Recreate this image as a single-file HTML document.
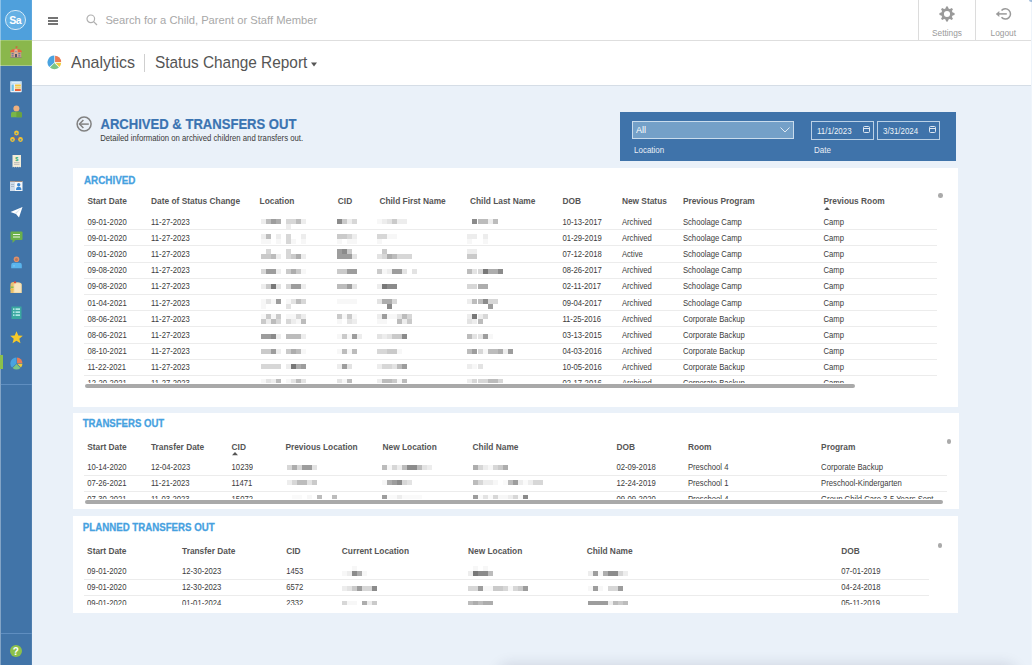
<!DOCTYPE html><html><head><meta charset="utf-8"><style>
*{margin:0;padding:0;box-sizing:border-box}
html,body{width:1032px;height:665px;overflow:hidden;background:#eaf1f9;font-family:"Liberation Sans",sans-serif}
body{position:relative}
.a{position:absolute}
.t{position:absolute;white-space:nowrap;line-height:1}
.h{font-weight:bold;color:#585858}
.b{color:#555}
</style></head><body>
<div class="a" style="left:0px;top:0px;width:32px;height:665px;background:#4174a8;"></div>
<div class="a" style="left:0px;top:0px;width:32px;height:40px;background:#4fa0dc;"></div>
<div class="a" style="left:0px;top:40px;width:32px;height:1px;background:#9cc66e;"></div>
<div class="a" style="left:0px;top:41px;width:32px;height:24px;background:#8ab74c;"></div>
<div class="a" style="left:0px;top:65px;width:32px;height:1px;background:#a8c98a;"></div>
<div class="a" style="left:0px;top:0px;width:1px;height:665px;background:rgba(255,255,255,0.35);"></div>
<div class="a" style="left:31px;top:0px;width:1px;height:665px;background:rgba(255,255,255,0.08);"></div>
<div class="a" style="left:1px;top:384px;width:31px;height:1px;background:#5f8ec0;"></div>
<div class="a" style="left:1px;top:633px;width:31px;height:1px;background:#5f8ec0;"></div>
<div class="a" style="left:0px;top:355px;width:3px;height:14px;background:#8cc04b;"></div>
<div class="a" style="left:5px;top:9.5px;width:20.6px;height:20.6px;border-radius:50%;border:1px solid #d6eaf8;background:#64b0e4"></div>
<div class="t" style="left:9.20px;top:14.91px;font-size:10.5px;color:#fff;font-weight:bold;letter-spacing:-0.5px">Sa</div>
<svg class="a" style="left:10px;top:46px" width="12" height="12" viewBox="0 0 12 12">
<rect x="5.8" y="0.3" width="0.5" height="3" fill="#c44"/>
<polygon points="6.2,0.3 8.3,0.9 6.2,1.7" fill="#e8503a"/>
<polygon points="0.2,5 2.5,3.2 9.5,3.2 11.8,5 11.8,6.3 0.2,6.3" fill="#ea6440"/>
<polygon points="4,4 6,2.4 8,4" fill="#e8a080"/>
<rect x="0.8" y="6.3" width="10.4" height="5" fill="#d4a08a"/>
<rect x="4.3" y="4" width="3.4" height="7.3" fill="#dcae96"/>
<rect x="1.6" y="7" width="2" height="1.3" fill="#6a78a0"/><rect x="8.4" y="7" width="2" height="1.3" fill="#6a78a0"/>
<rect x="1.6" y="9.2" width="2" height="1.3" fill="#6a78a0"/><rect x="8.4" y="9.2" width="2" height="1.3" fill="#6a78a0"/>
<rect x="5.1" y="8" width="1.8" height="3.3" fill="#4a5060"/>
<circle cx="6" cy="5.6" r="0.7" fill="#6a88b8"/>
<rect x="0.2" y="11.1" width="11.6" height="0.7" fill="#8a7a80"/>
</svg>
<svg class="a" style="left:10px;top:80px" width="13" height="13" viewBox="0 0 13 13"><rect x="0.3" y="1.3" width="11.4" height="11" rx="0.8" fill="#eef0f2"/><rect x="0.3" y="1.3" width="11.4" height="2.2" fill="#a8d0f0"/><rect x="1.5" y="2" width="9" height="0.8" fill="#e8f4fc"/>
<rect x="1.5" y="4.5" width="2.3" height="6.5" fill="#6cc0e8"/><rect x="5" y="4.5" width="5.8" height="2" fill="#f2c640"/><rect x="5" y="7.3" width="5.8" height="1.2" fill="#f2c640"/><rect x="5" y="9" width="5.8" height="2" fill="#e8643e"/></svg>
<svg class="a" style="left:10px;top:105px" width="13" height="13" viewBox="0 0 13 13"><circle cx="6.4" cy="3.4" r="3" fill="#eeb07e"/><path d="M1 12.3 V8.6 Q1 6.7 3 6.7 H9.8 Q11.8 6.7 11.8 8.6 V12.3 Z" fill="#7ab648"/><path d="M6.4 6.7 H9.8 Q11.8 6.7 11.8 8.6 V12.3 H6.4Z" fill="#6aa23e"/></svg>
<svg class="a" style="left:10px;top:130px" width="13" height="13" viewBox="0 0 13 13"><line x1="6.5" y1="3" x2="2.5" y2="9" stroke="#c0504a" stroke-width="0.8"/><line x1="6.5" y1="3" x2="10.5" y2="9" stroke="#c0504a" stroke-width="0.8"/><line x1="2.5" y1="9" x2="10.5" y2="9" stroke="#c0504a" stroke-width="0.8"/>
<circle cx="6.5" cy="3" r="2.4" fill="#f3c230"/><circle cx="6.5" cy="3.3" r="0.9" fill="#3d8fd0"/>
<circle cx="2.5" cy="9.5" r="2.4" fill="#f3c230"/><circle cx="2.5" cy="9.8" r="0.9" fill="#3d8fd0"/>
<circle cx="10.5" cy="9.5" r="2.4" fill="#f3c230"/><circle cx="10.5" cy="9.8" r="0.9" fill="#3d8fd0"/></svg>
<svg class="a" style="left:10px;top:155px" width="13" height="13" viewBox="0 0 13 13"><path d="M2.5 0 H11 V12.5 L9.9 11.8 L8.8 12.5 L7.7 11.8 L6.6 12.5 L5.5 11.8 L4.4 12.5 L3.4 11.8 L2.5 12.5 Z" fill="#f2ecd8"/><text x="6.7" y="5.6" font-size="5.5" fill="#2aa870" text-anchor="middle" font-family="Liberation Sans" font-weight="bold">$</text><rect x="4" y="7.3" width="5.5" height="0.9" fill="#b0b0b0"/><rect x="4" y="9" width="5.5" height="0.9" fill="#c0c0c0"/></svg>
<svg class="a" style="left:10px;top:180px" width="13" height="13" viewBox="0 0 13 13"><rect x="0" y="1" width="12.5" height="10" fill="#f4f6f8"/><rect x="0" y="1" width="12.5" height="0.8" fill="#8a7060"/><rect x="0" y="1.8" width="5" height="9.2" fill="#cfdceb"/><rect x="1" y="4" width="3" height="0.7" fill="#9ab"/><rect x="1" y="6" width="3" height="0.7" fill="#9ab"/><circle cx="8.7" cy="4.8" r="1.7" fill="#3a86d0"/><path d="M6 10 Q6 6.8 8.7 6.8 Q11.4 6.8 11.4 10Z" fill="#3a86d0"/></svg>
<svg class="a" style="left:10px;top:206px" width="13" height="13" viewBox="0 0 13 13"><path d="M0.5 6 L12.5 1 L9 11.5 L6 8 Z" fill="#fff"/><path d="M6 8 L12.5 1 L5 7Z" fill="#d8e4ee"/></svg>
<svg class="a" style="left:10px;top:231px" width="13" height="13" viewBox="0 0 13 13"><rect x="0.5" y="0.5" width="12" height="8.5" rx="1" fill="#6ab04a"/><path d="M2.5 9 L2.5 12 L5.5 9Z" fill="#6ab04a"/><rect x="3" y="3" width="7" height="1" fill="#e8f4e0"/><rect x="3" y="5.5" width="7" height="1" fill="#e8f4e0"/></svg>
<svg class="a" style="left:10px;top:256px" width="13" height="13" viewBox="0 0 13 13"><circle cx="6.5" cy="3.3" r="2.8" fill="#e0906a"/><circle cx="6.5" cy="3.5" r="1.5" fill="#b8785a"/><path d="M1.2 12.3 V9 Q1.2 6.8 3.4 6.8 H9.6 Q11.8 6.8 11.8 9 V12.3 Z" fill="#5ab4ec"/><rect x="3" y="9.5" width="2" height="0.8" fill="#8ccaf4"/></svg>
<svg class="a" style="left:10px;top:281px" width="13" height="13" viewBox="0 0 13 13"><path d="M0.5 3.5 Q0.5 1 3.5 1 Q6.5 1 6.5 3.5 V12 H0.5Z" fill="#e8c070"/><path d="M3.5 3.8 Q3.5 1.2 7.5 1.2 Q11.8 1.2 11.8 3.8 V12 H3.5Z" fill="#f4d8a0"/><path d="M4.5 4.2 Q4.5 2.2 7.6 2.2 Q10.8 2.2 10.8 4.2 V11.2 H4.5Z" fill="#f8e6c0"/><circle cx="5" cy="1.3" r="1.1" fill="#e04a3a"/><rect x="0.5" y="5.5" width="3" height="1.5" fill="#8cc04b"/><rect x="0.5" y="8" width="3" height="1.2" fill="#f2c640"/></svg>
<svg class="a" style="left:10px;top:306px" width="13" height="13" viewBox="0 0 13 13"><rect x="1.5" y="0.5" width="10" height="12.5" fill="#3aa8a0"/><rect x="3" y="2.5" width="1.5" height="1.2" fill="#dff"/><rect x="5.5" y="2.5" width="4.5" height="1.2" fill="#dff"/><rect x="3" y="5.5" width="1.5" height="1.2" fill="#dff"/><rect x="5.5" y="5.5" width="4.5" height="1.2" fill="#dff"/><rect x="3" y="8.5" width="1.5" height="1.2" fill="#dff"/><rect x="5.5" y="8.5" width="4.5" height="1.2" fill="#dff"/></svg>
<svg class="a" style="left:10px;top:331px" width="13" height="13" viewBox="0 0 13 13"><polygon points="6.5,0.3 8.3,4.5 12.8,4.8 9.3,7.8 10.5,12.3 6.5,9.8 2.5,12.3 3.7,7.8 0.2,4.8 4.7,4.5" fill="#f6c928"/></svg>
<svg class="a" style="left:10px;top:357px" width="13" height="13" viewBox="0 0 14 14">
<path d="M7 7 L7 0.5 A6.5 6.5 0 0 0 2.2 11.4 Z" fill="#4aa3e0"/>
<path d="M7.6 6.6 L7.6 0.6 A6.2 6.2 0 0 1 13.4 6.6 Z" fill="#e97c55"/>
<path d="M7.8 7.4 L13.4 7.4 A6.2 6.2 0 0 1 11.8 11.3 Z" fill="#f0cc3a"/>
<path d="M7 7.6 L11.3 11.8 A6.2 6.2 0 0 1 2.8 11.8 Z" fill="#7cc484"/>
</svg>
<div class="a" style="left:10px;top:645px;width:12px;height:12px;border-radius:50%;background:#8cc04b"></div>
<div class="t" style="left:12.80px;top:646.53px;font-size:10px;color:#fff;font-weight:bold;">?</div>
<div class="a" style="left:32px;top:0px;width:1000px;height:40px;background:#fff;"></div>
<div class="a" style="left:32px;top:40px;width:1000px;height:1px;background:#dedede;"></div>
<div class="a" style="left:48px;top:17.3px;width:10px;height:1.5px;background:#747474;"></div>
<div class="a" style="left:48px;top:20.3px;width:10px;height:1.5px;background:#747474;"></div>
<div class="a" style="left:48px;top:23.3px;width:10px;height:1.5px;background:#747474;"></div>
<svg class="a" style="left:86px;top:14px" width="12" height="12" viewBox="0 0 12 12"><circle cx="4.8" cy="4.8" r="3.8" fill="none" stroke="#b0b0b0" stroke-width="1.2"/><line x1="7.6" y1="7.6" x2="11" y2="11" stroke="#b0b0b0" stroke-width="1.3"/></svg>
<div class="t" style="left:105.40px;top:14.92px;font-size:11.2px;color:#a8a8a8;">Search for a Child, Parent or Staff Member</div>
<div class="a" style="left:918px;top:0px;width:1px;height:40px;background:#dcdcdc;"></div>
<div class="a" style="left:975px;top:0px;width:1px;height:40px;background:#dcdcdc;"></div>
<svg class="a" style="left:936.8px;top:4.3px" width="20" height="20" viewBox="0 0 20 20"><path d="M8.33 5.29 L9.10 2.45 L10.90 2.45 L11.67 5.29Z M12.15 5.49 L14.70 4.03 L15.97 5.30 L14.51 7.85Z M14.71 8.33 L17.55 9.10 L17.55 10.90 L14.71 11.67Z M14.51 12.15 L15.97 14.70 L14.70 15.97 L12.15 14.51Z M11.67 14.71 L10.90 17.55 L9.10 17.55 L8.33 14.71Z M7.85 14.51 L5.30 15.97 L4.03 14.70 L5.49 12.15Z M5.29 11.67 L2.45 10.90 L2.45 9.10 L5.29 8.33Z M5.49 7.85 L4.03 5.30 L5.30 4.03 L7.85 5.49Z" fill="#9a9a9a"/><circle cx="10" cy="10" r="4.4" fill="none" stroke="#9a9a9a" stroke-width="2.7"/></svg>
<div class="t" style="left:932.00px;top:28.97px;font-size:8.3px;color:#9a9a9a;transform:scaleY(1.05);transform-origin:0 7.03px;">Settings</div>
<svg class="a" style="left:994px;top:6px" width="20" height="17" viewBox="0 0 20 17"><path d="M7.5 4.6 A5.1 5.1 0 1 1 7.5 11.2" fill="none" stroke="#9a9a9a" stroke-width="1.5"/><line x1="4.5" y1="7.9" x2="12.8" y2="7.9" stroke="#9a9a9a" stroke-width="1.5"/><polygon points="1.8,7.9 5.3,4.9 5.3,10.9" fill="#9a9a9a"/></svg>
<div class="t" style="left:990.50px;top:28.93px;font-size:8.35px;color:#9a9a9a;transform:scaleY(1.05);transform-origin:0 7.07px;">Logout</div>
<div class="a" style="left:32px;top:41px;width:1000px;height:44px;background:#fff;"></div>
<div class="a" style="left:32px;top:85px;width:1000px;height:1px;background:#d5dde6;"></div>
<svg class="a" style="left:47.3px;top:55.2px" width="14.8" height="14.8" viewBox="0 0 14 14">
<path d="M7 7 L7 0.5 A6.5 6.5 0 0 0 2.2 11.4 Z" fill="#4aa3e0"/>
<path d="M7.6 6.6 L7.6 0.6 A6.2 6.2 0 0 1 13.4 6.6 Z" fill="#e97c55"/>
<path d="M7.8 7.4 L13.4 7.4 A6.2 6.2 0 0 1 11.8 11.3 Z" fill="#f0cc3a"/>
<path d="M7 7.6 L11.3 11.8 A6.2 6.2 0 0 1 2.8 11.8 Z" fill="#7cc484"/>
</svg>
<div class="t" style="left:71.00px;top:54.76px;font-size:16px;color:#555;transform:scaleY(1.05);transform-origin:0 13.54px;">Analytics</div>
<div class="a" style="left:144px;top:53.5px;width:1.2px;height:18.5px;background:#cfcfcf;"></div>
<div class="t" style="left:155.00px;top:54.96px;font-size:15.4px;color:#555;transform:scaleY(1.13);transform-origin:0 13.04px;">Status Change Report</div>
<svg class="a" style="left:310.5px;top:62px" width="6" height="5"><polygon points="0,0.5 6,0.5 3,4.5" fill="#555"/></svg>
<svg class="a" style="left:76px;top:116px" width="17" height="17" viewBox="0 0 17 17"><circle cx="8.1" cy="8.1" r="7.0" fill="none" stroke="#828282" stroke-width="1.5"/><line x1="3.6" y1="8.1" x2="12.8" y2="8.1" stroke="#828282" stroke-width="1.5"/><path d="M7.4 4.1 L3.5 8.1 L7.4 12.1" fill="none" stroke="#828282" stroke-width="1.5"/></svg>
<div class="t" style="left:100.50px;top:118.14px;font-size:13.07px;color:#3b74b2;font-weight:bold;-webkit-text-stroke:0.2px #3b74b2;transform:scaleY(1.06);transform-origin:0 11.06px;">ARCHIVED &amp; TRANSFERS OUT</div>
<div class="t" style="left:100.20px;top:134.64px;font-size:7.75px;color:#3a3a3a;transform:scaleY(1.1);transform-origin:0 6.56px;">Detailed information on archived children and transfers out.</div>
<div class="a" style="left:620px;top:112px;width:335.5px;height:49px;background:#3f73aa;"></div>
<div class="a" style="left:632px;top:121px;width:162px;height:18px;background:#74a0c8;border:1px solid rgba(230,240,250,0.75)"></div>
<div class="t" style="left:636.00px;top:126.38px;font-size:9px;color:#fff;transform:scaleY(1.08);transform-origin:0 7.62px;">All</div>
<svg class="a" style="left:780px;top:127px" width="10" height="6"><path d="M0.5 0.5 L5 5 L9.5 0.5" fill="none" stroke="#e0eaf4" stroke-width="1"/></svg>
<div class="t" style="left:634.00px;top:146.63px;font-size:8px;color:#e8eef6;transform:scaleY(1.08);transform-origin:0 6.77px;">Location</div>
<div class="a" style="left:811px;top:121px;width:63px;height:18.5px;border:1px solid rgba(230,240,250,0.75)"></div>
<div class="t" style="left:817.00px;top:127.51px;font-size:7.9px;color:#eef3f8;transform:scaleY(1.15);transform-origin:0 6.69px;">11/1/2023</div>
<svg class="a" style="left:863px;top:126px" width="7" height="7"><rect x="0.5" y="0.5" width="6" height="6" rx="1" fill="none" stroke="#dfe8f2" stroke-width="1"/><rect x="0.5" y="2" width="6" height="1" fill="#dfe8f2"/></svg>
<div class="a" style="left:877px;top:121px;width:63px;height:18.5px;border:1px solid rgba(230,240,250,0.75)"></div>
<div class="t" style="left:883.00px;top:127.51px;font-size:7.9px;color:#eef3f8;transform:scaleY(1.15);transform-origin:0 6.69px;">3/31/2024</div>
<svg class="a" style="left:929px;top:126px" width="7" height="7"><rect x="0.5" y="0.5" width="6" height="6" rx="1" fill="none" stroke="#dfe8f2" stroke-width="1"/><rect x="0.5" y="2" width="6" height="1" fill="#dfe8f2"/></svg>
<div class="t" style="left:814.00px;top:146.63px;font-size:8px;color:#e8eef6;transform:scaleY(1.1);transform-origin:0 6.77px;">Date</div>
<div class="a" style="left:73px;top:168px;width:884.5px;height:239px;background:#fff;"></div>
<div class="t" style="left:83.90px;top:175.62px;font-size:9.9px;color:#46a1df;font-weight:bold;-webkit-text-stroke:0.25px #46a1df;transform:scaleY(1.06);transform-origin:0 8.38px;">ARCHIVED</div>
<div class="t" style="left:87.40px;top:197.23px;font-size:8.35px;color:#565656;font-weight:bold;">Start Date</div>
<div class="t" style="left:151.10px;top:197.23px;font-size:8.35px;color:#565656;font-weight:bold;">Date of Status Change</div>
<div class="t" style="left:259.60px;top:197.23px;font-size:8.35px;color:#565656;font-weight:bold;">Location</div>
<div class="t" style="left:337.80px;top:197.23px;font-size:8.35px;color:#565656;font-weight:bold;">CID</div>
<div class="t" style="left:379.40px;top:197.23px;font-size:8.35px;color:#565656;font-weight:bold;">Child First Name</div>
<div class="t" style="left:470.00px;top:197.23px;font-size:8.35px;color:#565656;font-weight:bold;">Child Last Name</div>
<div class="t" style="left:562.40px;top:197.23px;font-size:8.35px;color:#565656;font-weight:bold;">DOB</div>
<div class="t" style="left:621.90px;top:197.23px;font-size:8.35px;color:#565656;font-weight:bold;">New Status</div>
<div class="t" style="left:682.90px;top:197.23px;font-size:8.35px;color:#565656;font-weight:bold;">Previous Program</div>
<div class="t" style="left:823.50px;top:197.23px;font-size:8.35px;color:#565656;font-weight:bold;">Previous Room</div>
<svg class="a" style="left:823.5px;top:206.5px" width="6" height="3.5"><polygon points="0,3.2 6,3.2 3,0" fill="#555"/></svg>
<div class="a" style="left:938.1px;top:193.2px;width:4.6px;height:4.6px;border-radius:50%;background:#aaa"></div>
<div class="a" style="left:73px;top:212px;width:884px;height:171px;overflow:hidden">
<div class="a" style="left:11px;top:17.3px;width:853px;height:1px;background:#ececec;"></div>
<div class="a" style="left:11px;top:33.48px;width:853px;height:1px;background:#ececec;"></div>
<div class="a" style="left:11px;top:49.66px;width:853px;height:1px;background:#ececec;"></div>
<div class="a" style="left:11px;top:65.84px;width:853px;height:1px;background:#ececec;"></div>
<div class="a" style="left:11px;top:82.02px;width:853px;height:1px;background:#ececec;"></div>
<div class="a" style="left:11px;top:98.2px;width:853px;height:1px;background:#ececec;"></div>
<div class="a" style="left:11px;top:114.38px;width:853px;height:1px;background:#ececec;"></div>
<div class="a" style="left:11px;top:130.56px;width:853px;height:1px;background:#ececec;"></div>
<div class="a" style="left:11px;top:146.74px;width:853px;height:1px;background:#ececec;"></div>
<div class="a" style="left:11px;top:162.92px;width:853px;height:1px;background:#ececec;"></div>
<div class="t" style="left:14.40px;top:6.78px;font-size:7.7px;color:#3c3c3c;transform:scaleY(1.1);transform-origin:0 6.52px;">09-01-2020</div>
<div class="t" style="left:78.10px;top:6.78px;font-size:7.7px;color:#3c3c3c;transform:scaleY(1.1);transform-origin:0 6.52px;">11-27-2023</div>
<div class="t" style="left:489.40px;top:6.78px;font-size:7.7px;color:#3c3c3c;transform:scaleY(1.1);transform-origin:0 6.52px;">10-13-2017</div>
<div class="t" style="left:548.90px;top:6.78px;font-size:7.7px;color:#3c3c3c;transform:scaleY(1.1);transform-origin:0 6.52px;">Archived</div>
<div class="t" style="left:609.90px;top:6.78px;font-size:7.7px;color:#3c3c3c;transform:scaleY(1.1);transform-origin:0 6.52px;">Schoolage Camp</div>
<div class="t" style="left:750.50px;top:6.78px;font-size:7.7px;color:#3c3c3c;transform:scaleY(1.1);transform-origin:0 6.52px;">Camp</div>
<div class="t" style="left:14.40px;top:22.93px;font-size:7.7px;color:#3c3c3c;transform:scaleY(1.1);transform-origin:0 6.52px;">09-01-2020</div>
<div class="t" style="left:78.10px;top:22.93px;font-size:7.7px;color:#3c3c3c;transform:scaleY(1.1);transform-origin:0 6.52px;">11-27-2023</div>
<div class="t" style="left:489.40px;top:22.93px;font-size:7.7px;color:#3c3c3c;transform:scaleY(1.1);transform-origin:0 6.52px;">01-29-2019</div>
<div class="t" style="left:548.90px;top:22.93px;font-size:7.7px;color:#3c3c3c;transform:scaleY(1.1);transform-origin:0 6.52px;">Archived</div>
<div class="t" style="left:609.90px;top:22.93px;font-size:7.7px;color:#3c3c3c;transform:scaleY(1.1);transform-origin:0 6.52px;">Schoolage Camp</div>
<div class="t" style="left:750.50px;top:22.93px;font-size:7.7px;color:#3c3c3c;transform:scaleY(1.1);transform-origin:0 6.52px;">Camp</div>
<div class="t" style="left:14.40px;top:39.08px;font-size:7.7px;color:#3c3c3c;transform:scaleY(1.1);transform-origin:0 6.52px;">09-01-2020</div>
<div class="t" style="left:78.10px;top:39.08px;font-size:7.7px;color:#3c3c3c;transform:scaleY(1.1);transform-origin:0 6.52px;">11-27-2023</div>
<div class="t" style="left:489.40px;top:39.08px;font-size:7.7px;color:#3c3c3c;transform:scaleY(1.1);transform-origin:0 6.52px;">07-12-2018</div>
<div class="t" style="left:548.90px;top:39.08px;font-size:7.7px;color:#3c3c3c;transform:scaleY(1.1);transform-origin:0 6.52px;">Active</div>
<div class="t" style="left:609.90px;top:39.08px;font-size:7.7px;color:#3c3c3c;transform:scaleY(1.1);transform-origin:0 6.52px;">Schoolage Camp</div>
<div class="t" style="left:750.50px;top:39.08px;font-size:7.7px;color:#3c3c3c;transform:scaleY(1.1);transform-origin:0 6.52px;">Camp</div>
<div class="t" style="left:14.40px;top:55.23px;font-size:7.7px;color:#3c3c3c;transform:scaleY(1.1);transform-origin:0 6.52px;">09-08-2020</div>
<div class="t" style="left:78.10px;top:55.23px;font-size:7.7px;color:#3c3c3c;transform:scaleY(1.1);transform-origin:0 6.52px;">11-27-2023</div>
<div class="t" style="left:489.40px;top:55.23px;font-size:7.7px;color:#3c3c3c;transform:scaleY(1.1);transform-origin:0 6.52px;">08-26-2017</div>
<div class="t" style="left:548.90px;top:55.23px;font-size:7.7px;color:#3c3c3c;transform:scaleY(1.1);transform-origin:0 6.52px;">Archived</div>
<div class="t" style="left:609.90px;top:55.23px;font-size:7.7px;color:#3c3c3c;transform:scaleY(1.1);transform-origin:0 6.52px;">Schoolage Camp</div>
<div class="t" style="left:750.50px;top:55.23px;font-size:7.7px;color:#3c3c3c;transform:scaleY(1.1);transform-origin:0 6.52px;">Camp</div>
<div class="t" style="left:14.40px;top:71.38px;font-size:7.7px;color:#3c3c3c;transform:scaleY(1.1);transform-origin:0 6.52px;">09-08-2020</div>
<div class="t" style="left:78.10px;top:71.38px;font-size:7.7px;color:#3c3c3c;transform:scaleY(1.1);transform-origin:0 6.52px;">11-27-2023</div>
<div class="t" style="left:489.40px;top:71.38px;font-size:7.7px;color:#3c3c3c;transform:scaleY(1.1);transform-origin:0 6.52px;">02-11-2017</div>
<div class="t" style="left:548.90px;top:71.38px;font-size:7.7px;color:#3c3c3c;transform:scaleY(1.1);transform-origin:0 6.52px;">Archived</div>
<div class="t" style="left:609.90px;top:71.38px;font-size:7.7px;color:#3c3c3c;transform:scaleY(1.1);transform-origin:0 6.52px;">Schoolage Camp</div>
<div class="t" style="left:750.50px;top:71.38px;font-size:7.7px;color:#3c3c3c;transform:scaleY(1.1);transform-origin:0 6.52px;">Camp</div>
<div class="t" style="left:14.40px;top:87.53px;font-size:7.7px;color:#3c3c3c;transform:scaleY(1.1);transform-origin:0 6.52px;">01-04-2021</div>
<div class="t" style="left:78.10px;top:87.53px;font-size:7.7px;color:#3c3c3c;transform:scaleY(1.1);transform-origin:0 6.52px;">11-27-2023</div>
<div class="t" style="left:489.40px;top:87.53px;font-size:7.7px;color:#3c3c3c;transform:scaleY(1.1);transform-origin:0 6.52px;">09-04-2017</div>
<div class="t" style="left:548.90px;top:87.53px;font-size:7.7px;color:#3c3c3c;transform:scaleY(1.1);transform-origin:0 6.52px;">Archived</div>
<div class="t" style="left:609.90px;top:87.53px;font-size:7.7px;color:#3c3c3c;transform:scaleY(1.1);transform-origin:0 6.52px;">Schoolage Camp</div>
<div class="t" style="left:750.50px;top:87.53px;font-size:7.7px;color:#3c3c3c;transform:scaleY(1.1);transform-origin:0 6.52px;">Camp</div>
<div class="t" style="left:14.40px;top:103.68px;font-size:7.7px;color:#3c3c3c;transform:scaleY(1.1);transform-origin:0 6.52px;">08-06-2021</div>
<div class="t" style="left:78.10px;top:103.68px;font-size:7.7px;color:#3c3c3c;transform:scaleY(1.1);transform-origin:0 6.52px;">11-27-2023</div>
<div class="t" style="left:489.40px;top:103.68px;font-size:7.7px;color:#3c3c3c;transform:scaleY(1.1);transform-origin:0 6.52px;">11-25-2016</div>
<div class="t" style="left:548.90px;top:103.68px;font-size:7.7px;color:#3c3c3c;transform:scaleY(1.1);transform-origin:0 6.52px;">Archived</div>
<div class="t" style="left:609.90px;top:103.68px;font-size:7.7px;color:#3c3c3c;transform:scaleY(1.1);transform-origin:0 6.52px;">Corporate Backup</div>
<div class="t" style="left:750.50px;top:103.68px;font-size:7.7px;color:#3c3c3c;transform:scaleY(1.1);transform-origin:0 6.52px;">Camp</div>
<div class="t" style="left:14.40px;top:119.83px;font-size:7.7px;color:#3c3c3c;transform:scaleY(1.1);transform-origin:0 6.52px;">08-06-2021</div>
<div class="t" style="left:78.10px;top:119.83px;font-size:7.7px;color:#3c3c3c;transform:scaleY(1.1);transform-origin:0 6.52px;">11-27-2023</div>
<div class="t" style="left:489.40px;top:119.83px;font-size:7.7px;color:#3c3c3c;transform:scaleY(1.1);transform-origin:0 6.52px;">03-13-2015</div>
<div class="t" style="left:548.90px;top:119.83px;font-size:7.7px;color:#3c3c3c;transform:scaleY(1.1);transform-origin:0 6.52px;">Archived</div>
<div class="t" style="left:609.90px;top:119.83px;font-size:7.7px;color:#3c3c3c;transform:scaleY(1.1);transform-origin:0 6.52px;">Corporate Backup</div>
<div class="t" style="left:750.50px;top:119.83px;font-size:7.7px;color:#3c3c3c;transform:scaleY(1.1);transform-origin:0 6.52px;">Camp</div>
<div class="t" style="left:14.40px;top:135.98px;font-size:7.7px;color:#3c3c3c;transform:scaleY(1.1);transform-origin:0 6.52px;">08-10-2021</div>
<div class="t" style="left:78.10px;top:135.98px;font-size:7.7px;color:#3c3c3c;transform:scaleY(1.1);transform-origin:0 6.52px;">11-27-2023</div>
<div class="t" style="left:489.40px;top:135.98px;font-size:7.7px;color:#3c3c3c;transform:scaleY(1.1);transform-origin:0 6.52px;">04-03-2016</div>
<div class="t" style="left:548.90px;top:135.98px;font-size:7.7px;color:#3c3c3c;transform:scaleY(1.1);transform-origin:0 6.52px;">Archived</div>
<div class="t" style="left:609.90px;top:135.98px;font-size:7.7px;color:#3c3c3c;transform:scaleY(1.1);transform-origin:0 6.52px;">Corporate Backup</div>
<div class="t" style="left:750.50px;top:135.98px;font-size:7.7px;color:#3c3c3c;transform:scaleY(1.1);transform-origin:0 6.52px;">Camp</div>
<div class="t" style="left:14.40px;top:152.13px;font-size:7.7px;color:#3c3c3c;transform:scaleY(1.1);transform-origin:0 6.52px;">11-22-2021</div>
<div class="t" style="left:78.10px;top:152.13px;font-size:7.7px;color:#3c3c3c;transform:scaleY(1.1);transform-origin:0 6.52px;">11-27-2023</div>
<div class="t" style="left:489.40px;top:152.13px;font-size:7.7px;color:#3c3c3c;transform:scaleY(1.1);transform-origin:0 6.52px;">10-05-2016</div>
<div class="t" style="left:548.90px;top:152.13px;font-size:7.7px;color:#3c3c3c;transform:scaleY(1.1);transform-origin:0 6.52px;">Archived</div>
<div class="t" style="left:609.90px;top:152.13px;font-size:7.7px;color:#3c3c3c;transform:scaleY(1.1);transform-origin:0 6.52px;">Corporate Backup</div>
<div class="t" style="left:750.50px;top:152.13px;font-size:7.7px;color:#3c3c3c;transform:scaleY(1.1);transform-origin:0 6.52px;">Camp</div>
<div class="t" style="left:14.40px;top:168.28px;font-size:7.7px;color:#3c3c3c;transform:scaleY(1.1);transform-origin:0 6.52px;">12-20-2021</div>
<div class="t" style="left:78.10px;top:168.28px;font-size:7.7px;color:#3c3c3c;transform:scaleY(1.1);transform-origin:0 6.52px;">11-27-2023</div>
<div class="t" style="left:489.40px;top:168.28px;font-size:7.7px;color:#3c3c3c;transform:scaleY(1.1);transform-origin:0 6.52px;">02-17-2016</div>
<div class="t" style="left:548.90px;top:168.28px;font-size:7.7px;color:#3c3c3c;transform:scaleY(1.1);transform-origin:0 6.52px;">Archived</div>
<div class="t" style="left:609.90px;top:168.28px;font-size:7.7px;color:#3c3c3c;transform:scaleY(1.1);transform-origin:0 6.52px;">Corporate Backup</div>
<div class="t" style="left:750.50px;top:168.28px;font-size:7.7px;color:#3c3c3c;transform:scaleY(1.1);transform-origin:0 6.52px;">Camp</div>
<div class="a" style="left:188.00px;top:6.60px;width:5px;height:5px;background:rgb(237,237,237)"></div>
<div class="a" style="left:193.04px;top:6.60px;width:5px;height:5px;background:rgb(188,188,188)"></div>
<div class="a" style="left:198.07px;top:6.60px;width:5px;height:5px;background:rgb(157,157,157)"></div>
<div class="a" style="left:203.11px;top:6.60px;width:5px;height:5px;background:rgb(173,173,173)"></div>
<div class="a" style="left:213.18px;top:6.60px;width:5px;height:5px;background:rgb(215,215,215)"></div>
<div class="a" style="left:218.21px;top:6.60px;width:5px;height:5px;background:rgb(215,215,215)"></div>
<div class="a" style="left:223.25px;top:6.60px;width:5px;height:5px;background:rgb(188,188,188)"></div>
<div class="a" style="left:228.28px;top:6.60px;width:5px;height:5px;background:rgb(237,237,237)"></div>
<div class="a" style="left:263.52px;top:6.60px;width:5px;height:5px;background:rgb(139,139,139)"></div>
<div class="a" style="left:268.56px;top:6.60px;width:5px;height:5px;background:rgb(202,202,202)"></div>
<div class="a" style="left:273.60px;top:6.60px;width:5px;height:5px;background:rgb(237,237,237)"></div>
<div class="a" style="left:278.63px;top:6.60px;width:5px;height:5px;background:rgb(215,215,215)"></div>
<div class="a" style="left:303.81px;top:6.60px;width:5px;height:5px;background:rgb(247,247,247)"></div>
<div class="a" style="left:308.84px;top:6.60px;width:5px;height:5px;background:rgb(237,237,237)"></div>
<div class="a" style="left:313.88px;top:6.60px;width:5px;height:5px;background:rgb(227,227,227)"></div>
<div class="a" style="left:318.91px;top:6.60px;width:5px;height:5px;background:rgb(202,202,202)"></div>
<div class="a" style="left:323.94px;top:6.60px;width:5px;height:5px;background:rgb(237,237,237)"></div>
<div class="a" style="left:328.98px;top:6.60px;width:5px;height:5px;background:rgb(237,237,237)"></div>
<div class="a" style="left:399.47px;top:6.60px;width:5px;height:5px;background:rgb(139,139,139)"></div>
<div class="a" style="left:404.50px;top:6.60px;width:5px;height:5px;background:rgb(188,188,188)"></div>
<div class="a" style="left:409.54px;top:6.60px;width:5px;height:5px;background:rgb(188,188,188)"></div>
<div class="a" style="left:414.58px;top:6.60px;width:5px;height:5px;background:rgb(237,237,237)"></div>
<div class="a" style="left:419.61px;top:6.60px;width:5px;height:5px;background:rgb(188,188,188)"></div>
<div class="a" style="left:213.18px;top:11.60px;width:5px;height:5px;background:rgb(237,237,237)"></div>
<div class="a" style="left:188.00px;top:21.60px;width:5px;height:5px;background:rgb(237,237,237)"></div>
<div class="a" style="left:193.04px;top:21.60px;width:5px;height:5px;background:rgb(188,188,188)"></div>
<div class="a" style="left:203.11px;top:21.60px;width:5px;height:5px;background:rgb(237,237,237)"></div>
<div class="a" style="left:213.18px;top:21.60px;width:5px;height:5px;background:rgb(215,215,215)"></div>
<div class="a" style="left:228.28px;top:21.60px;width:5px;height:5px;background:rgb(237,237,237)"></div>
<div class="a" style="left:263.52px;top:21.60px;width:5px;height:5px;background:rgb(202,202,202)"></div>
<div class="a" style="left:268.56px;top:21.60px;width:5px;height:5px;background:rgb(202,202,202)"></div>
<div class="a" style="left:273.60px;top:21.60px;width:5px;height:5px;background:rgb(215,215,215)"></div>
<div class="a" style="left:278.63px;top:21.60px;width:5px;height:5px;background:rgb(237,237,237)"></div>
<div class="a" style="left:303.81px;top:21.60px;width:5px;height:5px;background:rgb(215,215,215)"></div>
<div class="a" style="left:308.84px;top:21.60px;width:5px;height:5px;background:rgb(215,215,215)"></div>
<div class="a" style="left:313.88px;top:21.60px;width:5px;height:5px;background:rgb(247,247,247)"></div>
<div class="a" style="left:318.91px;top:21.60px;width:5px;height:5px;background:rgb(247,247,247)"></div>
<div class="a" style="left:394.44px;top:21.60px;width:5px;height:5px;background:rgb(237,237,237)"></div>
<div class="a" style="left:399.47px;top:21.60px;width:5px;height:5px;background:rgb(237,237,237)"></div>
<div class="a" style="left:409.54px;top:21.60px;width:5px;height:5px;background:rgb(237,237,237)"></div>
<div class="a" style="left:188.00px;top:26.60px;width:5px;height:5px;background:rgb(247,247,247)"></div>
<div class="a" style="left:193.04px;top:26.60px;width:5px;height:5px;background:rgb(247,247,247)"></div>
<div class="a" style="left:203.11px;top:26.60px;width:5px;height:5px;background:rgb(247,247,247)"></div>
<div class="a" style="left:213.18px;top:26.60px;width:5px;height:5px;background:rgb(215,215,215)"></div>
<div class="a" style="left:218.21px;top:26.60px;width:5px;height:5px;background:rgb(247,247,247)"></div>
<div class="a" style="left:228.28px;top:26.60px;width:5px;height:5px;background:rgb(247,247,247)"></div>
<div class="a" style="left:263.52px;top:26.60px;width:5px;height:5px;background:rgb(247,247,247)"></div>
<div class="a" style="left:273.60px;top:26.60px;width:5px;height:5px;background:rgb(247,247,247)"></div>
<div class="a" style="left:278.63px;top:26.60px;width:5px;height:5px;background:rgb(247,247,247)"></div>
<div class="a" style="left:303.81px;top:26.60px;width:5px;height:5px;background:rgb(247,247,247)"></div>
<div class="a" style="left:394.44px;top:26.60px;width:5px;height:5px;background:rgb(247,247,247)"></div>
<div class="a" style="left:409.54px;top:26.60px;width:5px;height:5px;background:rgb(247,247,247)"></div>
<div class="a" style="left:193.04px;top:36.60px;width:5px;height:5px;background:rgb(215,215,215)"></div>
<div class="a" style="left:213.18px;top:36.60px;width:5px;height:5px;background:rgb(215,215,215)"></div>
<div class="a" style="left:263.52px;top:36.60px;width:5px;height:5px;background:rgb(157,157,157)"></div>
<div class="a" style="left:268.56px;top:36.60px;width:5px;height:5px;background:rgb(139,139,139)"></div>
<div class="a" style="left:273.60px;top:36.60px;width:5px;height:5px;background:rgb(202,202,202)"></div>
<div class="a" style="left:308.84px;top:36.60px;width:5px;height:5px;background:rgb(202,202,202)"></div>
<div class="a" style="left:394.44px;top:36.60px;width:5px;height:5px;background:rgb(237,237,237)"></div>
<div class="a" style="left:399.47px;top:36.60px;width:5px;height:5px;background:rgb(237,237,237)"></div>
<div class="a" style="left:188.00px;top:41.60px;width:5px;height:5px;background:rgb(202,202,202)"></div>
<div class="a" style="left:193.04px;top:41.60px;width:5px;height:5px;background:rgb(202,202,202)"></div>
<div class="a" style="left:198.07px;top:41.60px;width:5px;height:5px;background:rgb(188,188,188)"></div>
<div class="a" style="left:203.11px;top:41.60px;width:5px;height:5px;background:rgb(237,237,237)"></div>
<div class="a" style="left:213.18px;top:41.60px;width:5px;height:5px;background:rgb(215,215,215)"></div>
<div class="a" style="left:218.21px;top:41.60px;width:5px;height:5px;background:rgb(202,202,202)"></div>
<div class="a" style="left:223.25px;top:41.60px;width:5px;height:5px;background:rgb(173,173,173)"></div>
<div class="a" style="left:228.28px;top:41.60px;width:5px;height:5px;background:rgb(237,237,237)"></div>
<div class="a" style="left:263.52px;top:41.60px;width:5px;height:5px;background:rgb(157,157,157)"></div>
<div class="a" style="left:268.56px;top:41.60px;width:5px;height:5px;background:rgb(157,157,157)"></div>
<div class="a" style="left:273.60px;top:41.60px;width:5px;height:5px;background:rgb(157,157,157)"></div>
<div class="a" style="left:278.63px;top:41.60px;width:5px;height:5px;background:rgb(227,227,227)"></div>
<div class="a" style="left:303.81px;top:41.60px;width:5px;height:5px;background:rgb(227,227,227)"></div>
<div class="a" style="left:308.84px;top:41.60px;width:5px;height:5px;background:rgb(215,215,215)"></div>
<div class="a" style="left:313.88px;top:41.60px;width:5px;height:5px;background:rgb(173,173,173)"></div>
<div class="a" style="left:318.91px;top:41.60px;width:5px;height:5px;background:rgb(188,188,188)"></div>
<div class="a" style="left:323.94px;top:41.60px;width:5px;height:5px;background:rgb(215,215,215)"></div>
<div class="a" style="left:328.98px;top:41.60px;width:5px;height:5px;background:rgb(215,215,215)"></div>
<div class="a" style="left:334.01px;top:41.60px;width:5px;height:5px;background:rgb(215,215,215)"></div>
<div class="a" style="left:394.44px;top:41.60px;width:5px;height:5px;background:rgb(202,202,202)"></div>
<div class="a" style="left:399.47px;top:41.60px;width:5px;height:5px;background:rgb(202,202,202)"></div>
<div class="a" style="left:188.00px;top:56.60px;width:5px;height:5px;background:rgb(215,215,215)"></div>
<div class="a" style="left:193.04px;top:56.60px;width:5px;height:5px;background:rgb(157,157,157)"></div>
<div class="a" style="left:198.07px;top:56.60px;width:5px;height:5px;background:rgb(157,157,157)"></div>
<div class="a" style="left:203.11px;top:56.60px;width:5px;height:5px;background:rgb(237,237,237)"></div>
<div class="a" style="left:213.18px;top:56.60px;width:5px;height:5px;background:rgb(202,202,202)"></div>
<div class="a" style="left:218.21px;top:56.60px;width:5px;height:5px;background:rgb(173,173,173)"></div>
<div class="a" style="left:223.25px;top:56.60px;width:5px;height:5px;background:rgb(202,202,202)"></div>
<div class="a" style="left:228.28px;top:56.60px;width:5px;height:5px;background:rgb(247,247,247)"></div>
<div class="a" style="left:263.52px;top:56.60px;width:5px;height:5px;background:rgb(202,202,202)"></div>
<div class="a" style="left:268.56px;top:56.60px;width:5px;height:5px;background:rgb(202,202,202)"></div>
<div class="a" style="left:273.60px;top:56.60px;width:5px;height:5px;background:rgb(157,157,157)"></div>
<div class="a" style="left:278.63px;top:56.60px;width:5px;height:5px;background:rgb(157,157,157)"></div>
<div class="a" style="left:303.81px;top:56.60px;width:5px;height:5px;background:rgb(202,202,202)"></div>
<div class="a" style="left:308.84px;top:56.60px;width:5px;height:5px;background:rgb(247,247,247)"></div>
<div class="a" style="left:313.88px;top:56.60px;width:5px;height:5px;background:rgb(237,237,237)"></div>
<div class="a" style="left:318.91px;top:56.60px;width:5px;height:5px;background:rgb(157,157,157)"></div>
<div class="a" style="left:323.94px;top:56.60px;width:5px;height:5px;background:rgb(157,157,157)"></div>
<div class="a" style="left:328.98px;top:56.60px;width:5px;height:5px;background:rgb(227,227,227)"></div>
<div class="a" style="left:339.05px;top:56.60px;width:5px;height:5px;background:rgb(227,227,227)"></div>
<div class="a" style="left:394.44px;top:56.60px;width:5px;height:5px;background:rgb(188,188,188)"></div>
<div class="a" style="left:399.47px;top:56.60px;width:5px;height:5px;background:rgb(227,227,227)"></div>
<div class="a" style="left:404.50px;top:56.60px;width:5px;height:5px;background:rgb(215,215,215)"></div>
<div class="a" style="left:409.54px;top:56.60px;width:5px;height:5px;background:rgb(120,120,120)"></div>
<div class="a" style="left:414.58px;top:56.60px;width:5px;height:5px;background:rgb(173,173,173)"></div>
<div class="a" style="left:419.61px;top:56.60px;width:5px;height:5px;background:rgb(173,173,173)"></div>
<div class="a" style="left:424.64px;top:56.60px;width:5px;height:5px;background:rgb(139,139,139)"></div>
<div class="a" style="left:188.00px;top:71.60px;width:5px;height:5px;background:rgb(237,237,237)"></div>
<div class="a" style="left:193.04px;top:71.60px;width:5px;height:5px;background:rgb(202,202,202)"></div>
<div class="a" style="left:198.07px;top:71.60px;width:5px;height:5px;background:rgb(120,120,120)"></div>
<div class="a" style="left:203.11px;top:71.60px;width:5px;height:5px;background:rgb(227,227,227)"></div>
<div class="a" style="left:213.18px;top:71.60px;width:5px;height:5px;background:rgb(215,215,215)"></div>
<div class="a" style="left:218.21px;top:71.60px;width:5px;height:5px;background:rgb(157,157,157)"></div>
<div class="a" style="left:223.25px;top:71.60px;width:5px;height:5px;background:rgb(157,157,157)"></div>
<div class="a" style="left:228.28px;top:71.60px;width:5px;height:5px;background:rgb(237,237,237)"></div>
<div class="a" style="left:263.52px;top:71.60px;width:5px;height:5px;background:rgb(188,188,188)"></div>
<div class="a" style="left:268.56px;top:71.60px;width:5px;height:5px;background:rgb(188,188,188)"></div>
<div class="a" style="left:273.60px;top:71.60px;width:5px;height:5px;background:rgb(157,157,157)"></div>
<div class="a" style="left:278.63px;top:71.60px;width:5px;height:5px;background:rgb(227,227,227)"></div>
<div class="a" style="left:303.81px;top:71.60px;width:5px;height:5px;background:rgb(237,237,237)"></div>
<div class="a" style="left:308.84px;top:71.60px;width:5px;height:5px;background:rgb(120,120,120)"></div>
<div class="a" style="left:313.88px;top:71.60px;width:5px;height:5px;background:rgb(139,139,139)"></div>
<div class="a" style="left:318.91px;top:71.60px;width:5px;height:5px;background:rgb(139,139,139)"></div>
<div class="a" style="left:394.44px;top:71.60px;width:5px;height:5px;background:rgb(215,215,215)"></div>
<div class="a" style="left:399.47px;top:71.60px;width:5px;height:5px;background:rgb(215,215,215)"></div>
<div class="a" style="left:404.50px;top:71.60px;width:5px;height:5px;background:rgb(173,173,173)"></div>
<div class="a" style="left:409.54px;top:71.60px;width:5px;height:5px;background:rgb(173,173,173)"></div>
<div class="a" style="left:188.00px;top:86.60px;width:5px;height:5px;background:rgb(247,247,247)"></div>
<div class="a" style="left:193.04px;top:86.60px;width:5px;height:5px;background:rgb(227,227,227)"></div>
<div class="a" style="left:198.07px;top:86.60px;width:5px;height:5px;background:rgb(247,247,247)"></div>
<div class="a" style="left:203.11px;top:86.60px;width:5px;height:5px;background:rgb(157,157,157)"></div>
<div class="a" style="left:213.18px;top:86.60px;width:5px;height:5px;background:rgb(247,247,247)"></div>
<div class="a" style="left:218.21px;top:86.60px;width:5px;height:5px;background:rgb(227,227,227)"></div>
<div class="a" style="left:223.25px;top:86.60px;width:5px;height:5px;background:rgb(188,188,188)"></div>
<div class="a" style="left:228.28px;top:86.60px;width:5px;height:5px;background:rgb(215,215,215)"></div>
<div class="a" style="left:263.52px;top:86.60px;width:5px;height:5px;background:rgb(247,247,247)"></div>
<div class="a" style="left:268.56px;top:86.60px;width:5px;height:5px;background:rgb(247,247,247)"></div>
<div class="a" style="left:273.60px;top:86.60px;width:5px;height:5px;background:rgb(247,247,247)"></div>
<div class="a" style="left:278.63px;top:86.60px;width:5px;height:5px;background:rgb(247,247,247)"></div>
<div class="a" style="left:303.81px;top:86.60px;width:5px;height:5px;background:rgb(227,227,227)"></div>
<div class="a" style="left:308.84px;top:86.60px;width:5px;height:5px;background:rgb(173,173,173)"></div>
<div class="a" style="left:313.88px;top:86.60px;width:5px;height:5px;background:rgb(173,173,173)"></div>
<div class="a" style="left:318.91px;top:86.60px;width:5px;height:5px;background:rgb(215,215,215)"></div>
<div class="a" style="left:394.44px;top:86.60px;width:5px;height:5px;background:rgb(237,237,237)"></div>
<div class="a" style="left:399.47px;top:86.60px;width:5px;height:5px;background:rgb(188,188,188)"></div>
<div class="a" style="left:404.50px;top:86.60px;width:5px;height:5px;background:rgb(188,188,188)"></div>
<div class="a" style="left:409.54px;top:86.60px;width:5px;height:5px;background:rgb(139,139,139)"></div>
<div class="a" style="left:414.58px;top:86.60px;width:5px;height:5px;background:rgb(215,215,215)"></div>
<div class="a" style="left:419.61px;top:86.60px;width:5px;height:5px;background:rgb(215,215,215)"></div>
<div class="a" style="left:188.00px;top:91.60px;width:5px;height:5px;background:rgb(247,247,247)"></div>
<div class="a" style="left:213.18px;top:91.60px;width:5px;height:5px;background:rgb(227,227,227)"></div>
<div class="a" style="left:313.88px;top:91.60px;width:5px;height:5px;background:rgb(139,139,139)"></div>
<div class="a" style="left:414.58px;top:91.60px;width:5px;height:5px;background:rgb(157,157,157)"></div>
<div class="a" style="left:188.00px;top:101.60px;width:5px;height:5px;background:rgb(247,247,247)"></div>
<div class="a" style="left:193.04px;top:101.60px;width:5px;height:5px;background:rgb(202,202,202)"></div>
<div class="a" style="left:198.07px;top:101.60px;width:5px;height:5px;background:rgb(247,247,247)"></div>
<div class="a" style="left:203.11px;top:101.60px;width:5px;height:5px;background:rgb(202,202,202)"></div>
<div class="a" style="left:213.18px;top:101.60px;width:5px;height:5px;background:rgb(247,247,247)"></div>
<div class="a" style="left:218.21px;top:101.60px;width:5px;height:5px;background:rgb(247,247,247)"></div>
<div class="a" style="left:223.25px;top:101.60px;width:5px;height:5px;background:rgb(215,215,215)"></div>
<div class="a" style="left:228.28px;top:101.60px;width:5px;height:5px;background:rgb(237,237,237)"></div>
<div class="a" style="left:263.52px;top:101.60px;width:5px;height:5px;background:rgb(202,202,202)"></div>
<div class="a" style="left:268.56px;top:101.60px;width:5px;height:5px;background:rgb(247,247,247)"></div>
<div class="a" style="left:273.60px;top:101.60px;width:5px;height:5px;background:rgb(202,202,202)"></div>
<div class="a" style="left:278.63px;top:101.60px;width:5px;height:5px;background:rgb(247,247,247)"></div>
<div class="a" style="left:303.81px;top:101.60px;width:5px;height:5px;background:rgb(237,237,237)"></div>
<div class="a" style="left:308.84px;top:101.60px;width:5px;height:5px;background:rgb(157,157,157)"></div>
<div class="a" style="left:313.88px;top:101.60px;width:5px;height:5px;background:rgb(247,247,247)"></div>
<div class="a" style="left:318.91px;top:101.60px;width:5px;height:5px;background:rgb(247,247,247)"></div>
<div class="a" style="left:323.94px;top:101.60px;width:5px;height:5px;background:rgb(227,227,227)"></div>
<div class="a" style="left:328.98px;top:101.60px;width:5px;height:5px;background:rgb(188,188,188)"></div>
<div class="a" style="left:334.01px;top:101.60px;width:5px;height:5px;background:rgb(215,215,215)"></div>
<div class="a" style="left:394.44px;top:101.60px;width:5px;height:5px;background:rgb(237,237,237)"></div>
<div class="a" style="left:399.47px;top:101.60px;width:5px;height:5px;background:rgb(120,120,120)"></div>
<div class="a" style="left:404.50px;top:101.60px;width:5px;height:5px;background:rgb(237,237,237)"></div>
<div class="a" style="left:409.54px;top:101.60px;width:5px;height:5px;background:rgb(215,215,215)"></div>
<div class="a" style="left:188.00px;top:106.60px;width:5px;height:5px;background:rgb(202,202,202)"></div>
<div class="a" style="left:193.04px;top:106.60px;width:5px;height:5px;background:rgb(237,237,237)"></div>
<div class="a" style="left:198.07px;top:106.60px;width:5px;height:5px;background:rgb(188,188,188)"></div>
<div class="a" style="left:203.11px;top:106.60px;width:5px;height:5px;background:rgb(215,215,215)"></div>
<div class="a" style="left:213.18px;top:106.60px;width:5px;height:5px;background:rgb(215,215,215)"></div>
<div class="a" style="left:218.21px;top:106.60px;width:5px;height:5px;background:rgb(237,237,237)"></div>
<div class="a" style="left:223.25px;top:106.60px;width:5px;height:5px;background:rgb(247,247,247)"></div>
<div class="a" style="left:228.28px;top:106.60px;width:5px;height:5px;background:rgb(188,188,188)"></div>
<div class="a" style="left:263.52px;top:106.60px;width:5px;height:5px;background:rgb(247,247,247)"></div>
<div class="a" style="left:273.60px;top:106.60px;width:5px;height:5px;background:rgb(227,227,227)"></div>
<div class="a" style="left:278.63px;top:106.60px;width:5px;height:5px;background:rgb(237,237,237)"></div>
<div class="a" style="left:303.81px;top:106.60px;width:5px;height:5px;background:rgb(247,247,247)"></div>
<div class="a" style="left:308.84px;top:106.60px;width:5px;height:5px;background:rgb(247,247,247)"></div>
<div class="a" style="left:323.94px;top:106.60px;width:5px;height:5px;background:rgb(188,188,188)"></div>
<div class="a" style="left:328.98px;top:106.60px;width:5px;height:5px;background:rgb(237,237,237)"></div>
<div class="a" style="left:334.01px;top:106.60px;width:5px;height:5px;background:rgb(202,202,202)"></div>
<div class="a" style="left:394.44px;top:106.60px;width:5px;height:5px;background:rgb(227,227,227)"></div>
<div class="a" style="left:399.47px;top:106.60px;width:5px;height:5px;background:rgb(237,237,237)"></div>
<div class="a" style="left:404.50px;top:106.60px;width:5px;height:5px;background:rgb(188,188,188)"></div>
<div class="a" style="left:188.00px;top:121.60px;width:5px;height:5px;background:rgb(157,157,157)"></div>
<div class="a" style="left:193.04px;top:121.60px;width:5px;height:5px;background:rgb(157,157,157)"></div>
<div class="a" style="left:198.07px;top:121.60px;width:5px;height:5px;background:rgb(139,139,139)"></div>
<div class="a" style="left:203.11px;top:121.60px;width:5px;height:5px;background:rgb(237,237,237)"></div>
<div class="a" style="left:213.18px;top:121.60px;width:5px;height:5px;background:rgb(188,188,188)"></div>
<div class="a" style="left:218.21px;top:121.60px;width:5px;height:5px;background:rgb(188,188,188)"></div>
<div class="a" style="left:223.25px;top:121.60px;width:5px;height:5px;background:rgb(188,188,188)"></div>
<div class="a" style="left:228.28px;top:121.60px;width:5px;height:5px;background:rgb(237,237,237)"></div>
<div class="a" style="left:263.52px;top:121.60px;width:5px;height:5px;background:rgb(247,247,247)"></div>
<div class="a" style="left:268.56px;top:121.60px;width:5px;height:5px;background:rgb(202,202,202)"></div>
<div class="a" style="left:273.60px;top:121.60px;width:5px;height:5px;background:rgb(247,247,247)"></div>
<div class="a" style="left:278.63px;top:121.60px;width:5px;height:5px;background:rgb(157,157,157)"></div>
<div class="a" style="left:283.67px;top:121.60px;width:5px;height:5px;background:rgb(237,237,237)"></div>
<div class="a" style="left:303.81px;top:121.60px;width:5px;height:5px;background:rgb(227,227,227)"></div>
<div class="a" style="left:308.84px;top:121.60px;width:5px;height:5px;background:rgb(237,237,237)"></div>
<div class="a" style="left:313.88px;top:121.60px;width:5px;height:5px;background:rgb(227,227,227)"></div>
<div class="a" style="left:318.91px;top:121.60px;width:5px;height:5px;background:rgb(202,202,202)"></div>
<div class="a" style="left:323.94px;top:121.60px;width:5px;height:5px;background:rgb(202,202,202)"></div>
<div class="a" style="left:328.98px;top:121.60px;width:5px;height:5px;background:rgb(139,139,139)"></div>
<div class="a" style="left:394.44px;top:121.60px;width:5px;height:5px;background:rgb(188,188,188)"></div>
<div class="a" style="left:399.47px;top:121.60px;width:5px;height:5px;background:rgb(227,227,227)"></div>
<div class="a" style="left:404.50px;top:121.60px;width:5px;height:5px;background:rgb(227,227,227)"></div>
<div class="a" style="left:409.54px;top:121.60px;width:5px;height:5px;background:rgb(157,157,157)"></div>
<div class="a" style="left:414.58px;top:121.60px;width:5px;height:5px;background:rgb(247,247,247)"></div>
<div class="a" style="left:188.00px;top:136.60px;width:5px;height:5px;background:rgb(202,202,202)"></div>
<div class="a" style="left:193.04px;top:136.60px;width:5px;height:5px;background:rgb(202,202,202)"></div>
<div class="a" style="left:198.07px;top:136.60px;width:5px;height:5px;background:rgb(157,157,157)"></div>
<div class="a" style="left:203.11px;top:136.60px;width:5px;height:5px;background:rgb(237,237,237)"></div>
<div class="a" style="left:213.18px;top:136.60px;width:5px;height:5px;background:rgb(202,202,202)"></div>
<div class="a" style="left:218.21px;top:136.60px;width:5px;height:5px;background:rgb(173,173,173)"></div>
<div class="a" style="left:223.25px;top:136.60px;width:5px;height:5px;background:rgb(188,188,188)"></div>
<div class="a" style="left:228.28px;top:136.60px;width:5px;height:5px;background:rgb(247,247,247)"></div>
<div class="a" style="left:263.52px;top:136.60px;width:5px;height:5px;background:rgb(247,247,247)"></div>
<div class="a" style="left:268.56px;top:136.60px;width:5px;height:5px;background:rgb(188,188,188)"></div>
<div class="a" style="left:273.60px;top:136.60px;width:5px;height:5px;background:rgb(247,247,247)"></div>
<div class="a" style="left:278.63px;top:136.60px;width:5px;height:5px;background:rgb(188,188,188)"></div>
<div class="a" style="left:303.81px;top:136.60px;width:5px;height:5px;background:rgb(215,215,215)"></div>
<div class="a" style="left:308.84px;top:136.60px;width:5px;height:5px;background:rgb(215,215,215)"></div>
<div class="a" style="left:313.88px;top:136.60px;width:5px;height:5px;background:rgb(202,202,202)"></div>
<div class="a" style="left:318.91px;top:136.60px;width:5px;height:5px;background:rgb(202,202,202)"></div>
<div class="a" style="left:323.94px;top:136.60px;width:5px;height:5px;background:rgb(247,247,247)"></div>
<div class="a" style="left:394.44px;top:136.60px;width:5px;height:5px;background:rgb(188,188,188)"></div>
<div class="a" style="left:399.47px;top:136.60px;width:5px;height:5px;background:rgb(157,157,157)"></div>
<div class="a" style="left:404.50px;top:136.60px;width:5px;height:5px;background:rgb(215,215,215)"></div>
<div class="a" style="left:409.54px;top:136.60px;width:5px;height:5px;background:rgb(247,247,247)"></div>
<div class="a" style="left:414.58px;top:136.60px;width:5px;height:5px;background:rgb(188,188,188)"></div>
<div class="a" style="left:419.61px;top:136.60px;width:5px;height:5px;background:rgb(188,188,188)"></div>
<div class="a" style="left:424.64px;top:136.60px;width:5px;height:5px;background:rgb(173,173,173)"></div>
<div class="a" style="left:429.68px;top:136.60px;width:5px;height:5px;background:rgb(237,237,237)"></div>
<div class="a" style="left:434.72px;top:136.60px;width:5px;height:5px;background:rgb(157,157,157)"></div>
<div class="a" style="left:188.00px;top:151.60px;width:5px;height:5px;background:rgb(215,215,215)"></div>
<div class="a" style="left:193.04px;top:151.60px;width:5px;height:5px;background:rgb(215,215,215)"></div>
<div class="a" style="left:198.07px;top:151.60px;width:5px;height:5px;background:rgb(215,215,215)"></div>
<div class="a" style="left:203.11px;top:151.60px;width:5px;height:5px;background:rgb(215,215,215)"></div>
<div class="a" style="left:213.18px;top:151.60px;width:5px;height:5px;background:rgb(237,237,237)"></div>
<div class="a" style="left:218.21px;top:151.60px;width:5px;height:5px;background:rgb(120,120,120)"></div>
<div class="a" style="left:223.25px;top:151.60px;width:5px;height:5px;background:rgb(173,173,173)"></div>
<div class="a" style="left:228.28px;top:151.60px;width:5px;height:5px;background:rgb(157,157,157)"></div>
<div class="a" style="left:263.52px;top:151.60px;width:5px;height:5px;background:rgb(237,237,237)"></div>
<div class="a" style="left:268.56px;top:151.60px;width:5px;height:5px;background:rgb(157,157,157)"></div>
<div class="a" style="left:273.60px;top:151.60px;width:5px;height:5px;background:rgb(227,227,227)"></div>
<div class="a" style="left:303.81px;top:151.60px;width:5px;height:5px;background:rgb(237,237,237)"></div>
<div class="a" style="left:308.84px;top:151.60px;width:5px;height:5px;background:rgb(215,215,215)"></div>
<div class="a" style="left:313.88px;top:151.60px;width:5px;height:5px;background:rgb(215,215,215)"></div>
<div class="a" style="left:318.91px;top:151.60px;width:5px;height:5px;background:rgb(227,227,227)"></div>
<div class="a" style="left:323.94px;top:151.60px;width:5px;height:5px;background:rgb(188,188,188)"></div>
<div class="a" style="left:328.98px;top:151.60px;width:5px;height:5px;background:rgb(157,157,157)"></div>
<div class="a" style="left:394.44px;top:151.60px;width:5px;height:5px;background:rgb(237,237,237)"></div>
<div class="a" style="left:399.47px;top:151.60px;width:5px;height:5px;background:rgb(247,247,247)"></div>
<div class="a" style="left:404.50px;top:151.60px;width:5px;height:5px;background:rgb(227,227,227)"></div>
<div class="a" style="left:188.00px;top:166.60px;width:5px;height:5px;background:rgb(247,247,247)"></div>
<div class="a" style="left:193.04px;top:166.60px;width:5px;height:5px;background:rgb(227,227,227)"></div>
<div class="a" style="left:198.07px;top:166.60px;width:5px;height:5px;background:rgb(237,237,237)"></div>
<div class="a" style="left:203.11px;top:166.60px;width:5px;height:5px;background:rgb(188,188,188)"></div>
<div class="a" style="left:213.18px;top:166.60px;width:5px;height:5px;background:rgb(247,247,247)"></div>
<div class="a" style="left:218.21px;top:166.60px;width:5px;height:5px;background:rgb(227,227,227)"></div>
<div class="a" style="left:223.25px;top:166.60px;width:5px;height:5px;background:rgb(188,188,188)"></div>
<div class="a" style="left:228.28px;top:166.60px;width:5px;height:5px;background:rgb(227,227,227)"></div>
<div class="a" style="left:263.52px;top:166.60px;width:5px;height:5px;background:rgb(227,227,227)"></div>
<div class="a" style="left:268.56px;top:166.60px;width:5px;height:5px;background:rgb(247,247,247)"></div>
<div class="a" style="left:273.60px;top:166.60px;width:5px;height:5px;background:rgb(188,188,188)"></div>
<div class="a" style="left:303.81px;top:166.60px;width:5px;height:5px;background:rgb(237,237,237)"></div>
<div class="a" style="left:308.84px;top:166.60px;width:5px;height:5px;background:rgb(188,188,188)"></div>
<div class="a" style="left:313.88px;top:166.60px;width:5px;height:5px;background:rgb(188,188,188)"></div>
<div class="a" style="left:318.91px;top:166.60px;width:5px;height:5px;background:rgb(202,202,202)"></div>
<div class="a" style="left:323.94px;top:166.60px;width:5px;height:5px;background:rgb(247,247,247)"></div>
<div class="a" style="left:328.98px;top:166.60px;width:5px;height:5px;background:rgb(188,188,188)"></div>
<div class="a" style="left:394.44px;top:166.60px;width:5px;height:5px;background:rgb(237,237,237)"></div>
<div class="a" style="left:399.47px;top:166.60px;width:5px;height:5px;background:rgb(215,215,215)"></div>
<div class="a" style="left:404.50px;top:166.60px;width:5px;height:5px;background:rgb(215,215,215)"></div>
<div class="a" style="left:409.54px;top:166.60px;width:5px;height:5px;background:rgb(215,215,215)"></div>
<div class="a" style="left:414.58px;top:166.60px;width:5px;height:5px;background:rgb(188,188,188)"></div>
<div class="a" style="left:419.61px;top:166.60px;width:5px;height:5px;background:rgb(188,188,188)"></div>
<div class="a" style="left:424.64px;top:166.60px;width:5px;height:5px;background:rgb(215,215,215)"></div>
</div>
<div class="a" style="left:84.5px;top:383.6px;width:770px;height:4.6px;border-radius:2.3px;background:#a9a9a9"></div>
<div class="a" style="left:73px;top:412.7px;width:885.5px;height:96.5px;background:#fff;"></div>
<div class="t" style="left:82.70px;top:419.07px;font-size:9.6px;color:#46a1df;font-weight:bold;-webkit-text-stroke:0.25px #46a1df;transform:scaleY(1.06);transform-origin:0 8.13px;">TRANSFERS OUT</div>
<div class="t" style="left:87.20px;top:443.03px;font-size:8.35px;color:#565656;font-weight:bold;">Start Date</div>
<div class="t" style="left:150.90px;top:443.03px;font-size:8.35px;color:#565656;font-weight:bold;">Transfer Date</div>
<div class="t" style="left:231.60px;top:443.03px;font-size:8.35px;color:#565656;font-weight:bold;">CID</div>
<div class="t" style="left:285.40px;top:443.03px;font-size:8.35px;color:#565656;font-weight:bold;">Previous Location</div>
<div class="t" style="left:382.50px;top:443.03px;font-size:8.35px;color:#565656;font-weight:bold;">New Location</div>
<div class="t" style="left:472.60px;top:443.03px;font-size:8.35px;color:#565656;font-weight:bold;">Child Name</div>
<div class="t" style="left:616.40px;top:443.03px;font-size:8.35px;color:#565656;font-weight:bold;">DOB</div>
<div class="t" style="left:687.90px;top:443.03px;font-size:8.35px;color:#565656;font-weight:bold;">Room</div>
<div class="t" style="left:821.10px;top:443.03px;font-size:8.35px;color:#565656;font-weight:bold;">Program</div>
<svg class="a" style="left:231.6px;top:452.3px" width="6" height="3.5"><polygon points="0,3.2 6,3.2 3,0" fill="#555"/></svg>
<div class="a" style="left:946.5px;top:439.2px;width:4.6px;height:4.6px;border-radius:50%;background:#aaa"></div>
<div class="a" style="left:73px;top:458px;width:885px;height:41px;overflow:hidden">
<div class="a" style="left:11px;top:17.3px;width:863px;height:1px;background:#ececec;"></div>
<div class="a" style="left:11px;top:33.3px;width:863px;height:1px;background:#ececec;"></div>
<div class="t" style="left:14.20px;top:6.08px;font-size:7.7px;color:#3c3c3c;transform:scaleY(1.1);transform-origin:0 6.52px;">10-14-2020</div>
<div class="t" style="left:77.90px;top:6.08px;font-size:7.7px;color:#3c3c3c;transform:scaleY(1.1);transform-origin:0 6.52px;">12-04-2023</div>
<div class="t" style="left:158.60px;top:6.08px;font-size:7.7px;color:#3c3c3c;transform:scaleY(1.1);transform-origin:0 6.52px;">10239</div>
<div class="t" style="left:543.40px;top:6.08px;font-size:7.7px;color:#3c3c3c;transform:scaleY(1.1);transform-origin:0 6.52px;">02-09-2018</div>
<div class="t" style="left:614.90px;top:6.08px;font-size:7.7px;color:#3c3c3c;transform:scaleY(1.1);transform-origin:0 6.52px;">Preschool 4</div>
<div class="t" style="left:748.10px;top:6.08px;font-size:7.7px;color:#3c3c3c;transform:scaleY(1.1);transform-origin:0 6.52px;">Corporate Backup</div>
<div class="t" style="left:14.20px;top:21.98px;font-size:7.7px;color:#3c3c3c;transform:scaleY(1.1);transform-origin:0 6.52px;">07-26-2021</div>
<div class="t" style="left:77.90px;top:21.98px;font-size:7.7px;color:#3c3c3c;transform:scaleY(1.1);transform-origin:0 6.52px;">11-21-2023</div>
<div class="t" style="left:158.60px;top:21.98px;font-size:7.7px;color:#3c3c3c;transform:scaleY(1.1);transform-origin:0 6.52px;">11471</div>
<div class="t" style="left:543.40px;top:21.98px;font-size:7.7px;color:#3c3c3c;transform:scaleY(1.1);transform-origin:0 6.52px;">12-24-2019</div>
<div class="t" style="left:614.90px;top:21.98px;font-size:7.7px;color:#3c3c3c;transform:scaleY(1.1);transform-origin:0 6.52px;">Preschool 1</div>
<div class="t" style="left:748.10px;top:21.98px;font-size:7.7px;color:#3c3c3c;transform:scaleY(1.1);transform-origin:0 6.52px;">Preschool-Kindergarten</div>
<div class="t" style="left:14.20px;top:37.88px;font-size:7.7px;color:#3c3c3c;transform:scaleY(1.1);transform-origin:0 6.52px;">07-30-2021</div>
<div class="t" style="left:77.90px;top:37.88px;font-size:7.7px;color:#3c3c3c;transform:scaleY(1.1);transform-origin:0 6.52px;">11-03-2023</div>
<div class="t" style="left:158.60px;top:37.88px;font-size:7.7px;color:#3c3c3c;transform:scaleY(1.1);transform-origin:0 6.52px;">15072</div>
<div class="t" style="left:543.40px;top:37.88px;font-size:7.7px;color:#3c3c3c;transform:scaleY(1.1);transform-origin:0 6.52px;">09-09-2020</div>
<div class="t" style="left:614.90px;top:37.88px;font-size:7.7px;color:#3c3c3c;transform:scaleY(1.1);transform-origin:0 6.52px;">Preschool 4</div>
<div class="t" style="left:748.10px;top:37.88px;font-size:7.7px;color:#3c3c3c;transform:scaleY(1.1);transform-origin:0 6.52px;">Group Child Care 3-5 Years Sept</div>
<div class="a" style="left:214.00px;top:6.80px;width:5px;height:5px;background:rgb(215,215,215)"></div>
<div class="a" style="left:219.00px;top:6.80px;width:5px;height:5px;background:rgb(173,173,173)"></div>
<div class="a" style="left:224.00px;top:6.80px;width:5px;height:5px;background:rgb(215,215,215)"></div>
<div class="a" style="left:229.00px;top:6.80px;width:5px;height:5px;background:rgb(157,157,157)"></div>
<div class="a" style="left:234.00px;top:6.80px;width:5px;height:5px;background:rgb(157,157,157)"></div>
<div class="a" style="left:239.00px;top:6.80px;width:5px;height:5px;background:rgb(227,227,227)"></div>
<div class="a" style="left:214.00px;top:21.80px;width:5px;height:5px;background:rgb(237,237,237)"></div>
<div class="a" style="left:219.00px;top:21.80px;width:5px;height:5px;background:rgb(215,215,215)"></div>
<div class="a" style="left:224.00px;top:21.80px;width:5px;height:5px;background:rgb(188,188,188)"></div>
<div class="a" style="left:229.00px;top:21.80px;width:5px;height:5px;background:rgb(188,188,188)"></div>
<div class="a" style="left:234.00px;top:21.80px;width:5px;height:5px;background:rgb(227,227,227)"></div>
<div class="a" style="left:239.00px;top:21.80px;width:5px;height:5px;background:rgb(202,202,202)"></div>
<div class="a" style="left:219.00px;top:37.00px;width:5px;height:5px;background:rgb(250,250,250)"></div>
<div class="a" style="left:224.00px;top:37.00px;width:5px;height:5px;background:rgb(250,250,250)"></div>
<div class="a" style="left:234.00px;top:37.00px;width:5px;height:5px;background:rgb(247,247,247)"></div>
<div class="a" style="left:244.00px;top:37.00px;width:5px;height:5px;background:rgb(188,188,188)"></div>
<div class="a" style="left:259.00px;top:37.00px;width:5px;height:5px;background:rgb(188,188,188)"></div>
<div class="a" style="left:309.00px;top:6.80px;width:5px;height:5px;background:rgb(188,188,188)"></div>
<div class="a" style="left:314.00px;top:6.80px;width:5px;height:5px;background:rgb(247,247,247)"></div>
<div class="a" style="left:319.00px;top:6.80px;width:5px;height:5px;background:rgb(215,215,215)"></div>
<div class="a" style="left:324.00px;top:6.80px;width:5px;height:5px;background:rgb(237,237,237)"></div>
<div class="a" style="left:329.00px;top:6.80px;width:5px;height:5px;background:rgb(188,188,188)"></div>
<div class="a" style="left:334.00px;top:6.80px;width:5px;height:5px;background:rgb(139,139,139)"></div>
<div class="a" style="left:339.00px;top:6.80px;width:5px;height:5px;background:rgb(139,139,139)"></div>
<div class="a" style="left:344.00px;top:6.80px;width:5px;height:5px;background:rgb(188,188,188)"></div>
<div class="a" style="left:349.00px;top:6.80px;width:5px;height:5px;background:rgb(227,227,227)"></div>
<div class="a" style="left:354.00px;top:6.80px;width:5px;height:5px;background:rgb(237,237,237)"></div>
<div class="a" style="left:309.00px;top:21.80px;width:5px;height:5px;background:rgb(247,247,247)"></div>
<div class="a" style="left:314.00px;top:21.80px;width:5px;height:5px;background:rgb(173,173,173)"></div>
<div class="a" style="left:319.00px;top:21.80px;width:5px;height:5px;background:rgb(157,157,157)"></div>
<div class="a" style="left:324.00px;top:21.80px;width:5px;height:5px;background:rgb(139,139,139)"></div>
<div class="a" style="left:329.00px;top:21.80px;width:5px;height:5px;background:rgb(215,215,215)"></div>
<div class="a" style="left:334.00px;top:21.80px;width:5px;height:5px;background:rgb(227,227,227)"></div>
<div class="a" style="left:309.00px;top:37.00px;width:5px;height:5px;background:rgb(157,157,157)"></div>
<div class="a" style="left:314.00px;top:37.00px;width:5px;height:5px;background:rgb(250,250,250)"></div>
<div class="a" style="left:319.00px;top:37.00px;width:5px;height:5px;background:rgb(250,250,250)"></div>
<div class="a" style="left:324.00px;top:37.00px;width:5px;height:5px;background:rgb(237,237,237)"></div>
<div class="a" style="left:329.00px;top:37.00px;width:5px;height:5px;background:rgb(250,250,250)"></div>
<div class="a" style="left:334.00px;top:37.00px;width:5px;height:5px;background:rgb(250,250,250)"></div>
<div class="a" style="left:339.00px;top:37.00px;width:5px;height:5px;background:rgb(250,250,250)"></div>
<div class="a" style="left:344.00px;top:37.00px;width:5px;height:5px;background:rgb(250,250,250)"></div>
<div class="a" style="left:400.00px;top:6.80px;width:5px;height:5px;background:rgb(173,173,173)"></div>
<div class="a" style="left:405.00px;top:6.80px;width:5px;height:5px;background:rgb(215,215,215)"></div>
<div class="a" style="left:410.00px;top:6.80px;width:5px;height:5px;background:rgb(237,237,237)"></div>
<div class="a" style="left:415.00px;top:6.80px;width:5px;height:5px;background:rgb(247,247,247)"></div>
<div class="a" style="left:420.00px;top:6.80px;width:5px;height:5px;background:rgb(215,215,215)"></div>
<div class="a" style="left:425.00px;top:6.80px;width:5px;height:5px;background:rgb(202,202,202)"></div>
<div class="a" style="left:430.00px;top:6.80px;width:5px;height:5px;background:rgb(173,173,173)"></div>
<div class="a" style="left:400.00px;top:21.80px;width:5px;height:5px;background:rgb(188,188,188)"></div>
<div class="a" style="left:405.00px;top:21.80px;width:5px;height:5px;background:rgb(215,215,215)"></div>
<div class="a" style="left:410.00px;top:21.80px;width:5px;height:5px;background:rgb(237,237,237)"></div>
<div class="a" style="left:415.00px;top:21.80px;width:5px;height:5px;background:rgb(237,237,237)"></div>
<div class="a" style="left:420.00px;top:21.80px;width:5px;height:5px;background:rgb(247,247,247)"></div>
<div class="a" style="left:430.00px;top:21.80px;width:5px;height:5px;background:rgb(250,250,250)"></div>
<div class="a" style="left:435.00px;top:21.80px;width:5px;height:5px;background:rgb(188,188,188)"></div>
<div class="a" style="left:440.00px;top:21.80px;width:5px;height:5px;background:rgb(157,157,157)"></div>
<div class="a" style="left:445.00px;top:21.80px;width:5px;height:5px;background:rgb(237,237,237)"></div>
<div class="a" style="left:450.00px;top:21.80px;width:5px;height:5px;background:rgb(250,250,250)"></div>
<div class="a" style="left:455.00px;top:21.80px;width:5px;height:5px;background:rgb(237,237,237)"></div>
<div class="a" style="left:460.00px;top:21.80px;width:5px;height:5px;background:rgb(215,215,215)"></div>
<div class="a" style="left:465.00px;top:21.80px;width:5px;height:5px;background:rgb(215,215,215)"></div>
<div class="a" style="left:400.00px;top:37.00px;width:5px;height:5px;background:rgb(157,157,157)"></div>
<div class="a" style="left:405.00px;top:37.00px;width:5px;height:5px;background:rgb(250,250,250)"></div>
<div class="a" style="left:410.00px;top:37.00px;width:5px;height:5px;background:rgb(227,227,227)"></div>
<div class="a" style="left:415.00px;top:37.00px;width:5px;height:5px;background:rgb(250,250,250)"></div>
<div class="a" style="left:420.00px;top:37.00px;width:5px;height:5px;background:rgb(215,215,215)"></div>
<div class="a" style="left:425.00px;top:37.00px;width:5px;height:5px;background:rgb(247,247,247)"></div>
<div class="a" style="left:430.00px;top:37.00px;width:5px;height:5px;background:rgb(247,247,247)"></div>
<div class="a" style="left:435.00px;top:37.00px;width:5px;height:5px;background:rgb(237,237,237)"></div>
<div class="a" style="left:440.00px;top:37.00px;width:5px;height:5px;background:rgb(215,215,215)"></div>
<div class="a" style="left:445.00px;top:37.00px;width:5px;height:5px;background:rgb(250,250,250)"></div>
<div class="a" style="left:450.00px;top:37.00px;width:5px;height:5px;background:rgb(139,139,139)"></div>
</div>
<div class="a" style="left:84.5px;top:499.6px;width:858px;height:4.4px;border-radius:2.2px;background:#a9a9a9"></div>
<div class="a" style="left:73px;top:516px;width:884.7px;height:96.5px;background:#fff;"></div>
<div class="t" style="left:82.80px;top:522.99px;font-size:9.7px;color:#46a1df;font-weight:bold;-webkit-text-stroke:0.25px #46a1df;transform:scaleY(1.06);transform-origin:0 8.21px;">PLANNED TRANSFERS OUT</div>
<div class="t" style="left:87.10px;top:547.13px;font-size:8.35px;color:#565656;font-weight:bold;">Start Date</div>
<div class="t" style="left:182.00px;top:547.13px;font-size:8.35px;color:#565656;font-weight:bold;">Transfer Date</div>
<div class="t" style="left:286.20px;top:547.13px;font-size:8.35px;color:#565656;font-weight:bold;">CID</div>
<div class="t" style="left:341.80px;top:547.13px;font-size:8.35px;color:#565656;font-weight:bold;">Current Location</div>
<div class="t" style="left:468.00px;top:547.13px;font-size:8.35px;color:#565656;font-weight:bold;">New Location</div>
<div class="t" style="left:586.70px;top:547.13px;font-size:8.35px;color:#565656;font-weight:bold;">Child Name</div>
<div class="t" style="left:841.30px;top:547.13px;font-size:8.35px;color:#565656;font-weight:bold;">DOB</div>
<div class="a" style="left:937.7px;top:543.0px;width:4.6px;height:4.6px;border-radius:50%;background:#aaa"></div>
<div class="a" style="left:73px;top:560px;width:885px;height:45.3px;overflow:hidden">
<div class="a" style="left:11px;top:19px;width:845px;height:1px;background:#ececec;"></div>
<div class="a" style="left:11px;top:35px;width:845px;height:1px;background:#ececec;"></div>
<div class="t" style="left:14.10px;top:8.08px;font-size:7.7px;color:#3c3c3c;transform:scaleY(1.1);transform-origin:0 6.52px;">09-01-2020</div>
<div class="t" style="left:109.00px;top:8.08px;font-size:7.7px;color:#3c3c3c;transform:scaleY(1.1);transform-origin:0 6.52px;">12-30-2023</div>
<div class="t" style="left:213.20px;top:8.08px;font-size:7.7px;color:#3c3c3c;transform:scaleY(1.1);transform-origin:0 6.52px;">1453</div>
<div class="t" style="left:768.30px;top:8.08px;font-size:7.7px;color:#3c3c3c;transform:scaleY(1.1);transform-origin:0 6.52px;">07-01-2019</div>
<div class="t" style="left:14.10px;top:24.08px;font-size:7.7px;color:#3c3c3c;transform:scaleY(1.1);transform-origin:0 6.52px;">09-01-2020</div>
<div class="t" style="left:109.00px;top:24.08px;font-size:7.7px;color:#3c3c3c;transform:scaleY(1.1);transform-origin:0 6.52px;">12-30-2023</div>
<div class="t" style="left:213.20px;top:24.08px;font-size:7.7px;color:#3c3c3c;transform:scaleY(1.1);transform-origin:0 6.52px;">6572</div>
<div class="t" style="left:768.30px;top:24.08px;font-size:7.7px;color:#3c3c3c;transform:scaleY(1.1);transform-origin:0 6.52px;">04-24-2018</div>
<div class="t" style="left:14.10px;top:40.08px;font-size:7.7px;color:#3c3c3c;transform:scaleY(1.1);transform-origin:0 6.52px;">09-01-2020</div>
<div class="t" style="left:109.00px;top:40.08px;font-size:7.7px;color:#3c3c3c;transform:scaleY(1.1);transform-origin:0 6.52px;">01-01-2024</div>
<div class="t" style="left:213.20px;top:40.08px;font-size:7.7px;color:#3c3c3c;transform:scaleY(1.1);transform-origin:0 6.52px;">2332</div>
<div class="t" style="left:768.30px;top:40.08px;font-size:7.7px;color:#3c3c3c;transform:scaleY(1.1);transform-origin:0 6.52px;">05-11-2019</div>
<div class="a" style="left:269.00px;top:10.70px;width:5px;height:5px;background:rgb(247,247,247)"></div>
<div class="a" style="left:274.00px;top:10.70px;width:5px;height:5px;background:rgb(237,237,237)"></div>
<div class="a" style="left:279.00px;top:10.70px;width:5px;height:5px;background:rgb(139,139,139)"></div>
<div class="a" style="left:284.00px;top:10.70px;width:5px;height:5px;background:rgb(173,173,173)"></div>
<div class="a" style="left:289.00px;top:10.70px;width:5px;height:5px;background:rgb(247,247,247)"></div>
<div class="a" style="left:279.00px;top:5.70px;width:5px;height:5px;background:rgb(247,247,247)"></div>
<div class="a" style="left:269.00px;top:25.80px;width:5px;height:5px;background:rgb(237,237,237)"></div>
<div class="a" style="left:274.00px;top:25.80px;width:5px;height:5px;background:rgb(227,227,227)"></div>
<div class="a" style="left:279.00px;top:25.80px;width:5px;height:5px;background:rgb(202,202,202)"></div>
<div class="a" style="left:284.00px;top:25.80px;width:5px;height:5px;background:rgb(157,157,157)"></div>
<div class="a" style="left:289.00px;top:25.80px;width:5px;height:5px;background:rgb(215,215,215)"></div>
<div class="a" style="left:294.00px;top:25.80px;width:5px;height:5px;background:rgb(215,215,215)"></div>
<div class="a" style="left:299.00px;top:25.80px;width:5px;height:5px;background:rgb(139,139,139)"></div>
<div class="a" style="left:269.00px;top:40.70px;width:5px;height:5px;background:rgb(215,215,215)"></div>
<div class="a" style="left:274.00px;top:40.70px;width:5px;height:5px;background:rgb(247,247,247)"></div>
<div class="a" style="left:279.00px;top:40.70px;width:5px;height:5px;background:rgb(247,247,247)"></div>
<div class="a" style="left:289.00px;top:40.70px;width:5px;height:5px;background:rgb(173,173,173)"></div>
<div class="a" style="left:294.00px;top:40.70px;width:5px;height:5px;background:rgb(237,237,237)"></div>
<div class="a" style="left:299.00px;top:40.70px;width:5px;height:5px;background:rgb(202,202,202)"></div>
<div class="a" style="left:395.00px;top:10.70px;width:5px;height:5px;background:rgb(237,237,237)"></div>
<div class="a" style="left:400.00px;top:10.70px;width:5px;height:5px;background:rgb(120,120,120)"></div>
<div class="a" style="left:405.00px;top:10.70px;width:5px;height:5px;background:rgb(139,139,139)"></div>
<div class="a" style="left:410.00px;top:10.70px;width:5px;height:5px;background:rgb(139,139,139)"></div>
<div class="a" style="left:415.00px;top:10.70px;width:5px;height:5px;background:rgb(188,188,188)"></div>
<div class="a" style="left:400.00px;top:5.70px;width:5px;height:5px;background:rgb(247,247,247)"></div>
<div class="a" style="left:410.00px;top:5.70px;width:5px;height:5px;background:rgb(247,247,247)"></div>
<div class="a" style="left:395.00px;top:25.80px;width:5px;height:5px;background:rgb(215,215,215)"></div>
<div class="a" style="left:400.00px;top:25.80px;width:5px;height:5px;background:rgb(215,215,215)"></div>
<div class="a" style="left:405.00px;top:25.80px;width:5px;height:5px;background:rgb(157,157,157)"></div>
<div class="a" style="left:410.00px;top:25.80px;width:5px;height:5px;background:rgb(247,247,247)"></div>
<div class="a" style="left:415.00px;top:25.80px;width:5px;height:5px;background:rgb(247,247,247)"></div>
<div class="a" style="left:420.00px;top:25.80px;width:5px;height:5px;background:rgb(202,202,202)"></div>
<div class="a" style="left:425.00px;top:25.80px;width:5px;height:5px;background:rgb(202,202,202)"></div>
<div class="a" style="left:430.00px;top:25.80px;width:5px;height:5px;background:rgb(215,215,215)"></div>
<div class="a" style="left:435.00px;top:25.80px;width:5px;height:5px;background:rgb(247,247,247)"></div>
<div class="a" style="left:440.00px;top:25.80px;width:5px;height:5px;background:rgb(215,215,215)"></div>
<div class="a" style="left:445.00px;top:25.80px;width:5px;height:5px;background:rgb(202,202,202)"></div>
<div class="a" style="left:450.00px;top:25.80px;width:5px;height:5px;background:rgb(157,157,157)"></div>
<div class="a" style="left:395.00px;top:40.70px;width:5px;height:5px;background:rgb(188,188,188)"></div>
<div class="a" style="left:400.00px;top:40.70px;width:5px;height:5px;background:rgb(173,173,173)"></div>
<div class="a" style="left:405.00px;top:40.70px;width:5px;height:5px;background:rgb(188,188,188)"></div>
<div class="a" style="left:410.00px;top:40.70px;width:5px;height:5px;background:rgb(173,173,173)"></div>
<div class="a" style="left:415.00px;top:40.70px;width:5px;height:5px;background:rgb(173,173,173)"></div>
<div class="a" style="left:515.00px;top:10.70px;width:5px;height:5px;background:rgb(237,237,237)"></div>
<div class="a" style="left:520.00px;top:10.70px;width:5px;height:5px;background:rgb(157,157,157)"></div>
<div class="a" style="left:525.00px;top:10.70px;width:5px;height:5px;background:rgb(247,247,247)"></div>
<div class="a" style="left:530.00px;top:10.70px;width:5px;height:5px;background:rgb(173,173,173)"></div>
<div class="a" style="left:535.00px;top:10.70px;width:5px;height:5px;background:rgb(139,139,139)"></div>
<div class="a" style="left:540.00px;top:10.70px;width:5px;height:5px;background:rgb(139,139,139)"></div>
<div class="a" style="left:545.00px;top:10.70px;width:5px;height:5px;background:rgb(215,215,215)"></div>
<div class="a" style="left:550.00px;top:10.70px;width:5px;height:5px;background:rgb(237,237,237)"></div>
<div class="a" style="left:515.00px;top:25.80px;width:5px;height:5px;background:rgb(247,247,247)"></div>
<div class="a" style="left:520.00px;top:25.80px;width:5px;height:5px;background:rgb(157,157,157)"></div>
<div class="a" style="left:525.00px;top:25.80px;width:5px;height:5px;background:rgb(247,247,247)"></div>
<div class="a" style="left:535.00px;top:25.80px;width:5px;height:5px;background:rgb(215,215,215)"></div>
<div class="a" style="left:540.00px;top:25.80px;width:5px;height:5px;background:rgb(215,215,215)"></div>
<div class="a" style="left:545.00px;top:25.80px;width:5px;height:5px;background:rgb(157,157,157)"></div>
<div class="a" style="left:515.00px;top:40.70px;width:5px;height:5px;background:rgb(157,157,157)"></div>
<div class="a" style="left:520.00px;top:40.70px;width:5px;height:5px;background:rgb(157,157,157)"></div>
<div class="a" style="left:525.00px;top:40.70px;width:5px;height:5px;background:rgb(157,157,157)"></div>
<div class="a" style="left:530.00px;top:40.70px;width:5px;height:5px;background:rgb(157,157,157)"></div>
<div class="a" style="left:535.00px;top:40.70px;width:5px;height:5px;background:rgb(237,237,237)"></div>
<div class="a" style="left:540.00px;top:40.70px;width:5px;height:5px;background:rgb(188,188,188)"></div>
<div class="a" style="left:545.00px;top:40.70px;width:5px;height:5px;background:rgb(202,202,202)"></div>
<div class="a" style="left:550.00px;top:40.70px;width:5px;height:5px;background:rgb(188,188,188)"></div>
</div>
<div class="a" style="left:1031px;top:0px;width:1px;height:665px;background:#eef4fb;"></div>
<div class="a" style="left:1029px;top:-2px;width:5px;height:4px;border-radius:50%;background:#9fbcdc"></div>
<div class="a" style="left:500px;top:667px;width:515px;height:30px;border-radius:10px;box-shadow:0 -1px 14px 2px rgba(30,40,70,0.13)"></div>
</body></html>
